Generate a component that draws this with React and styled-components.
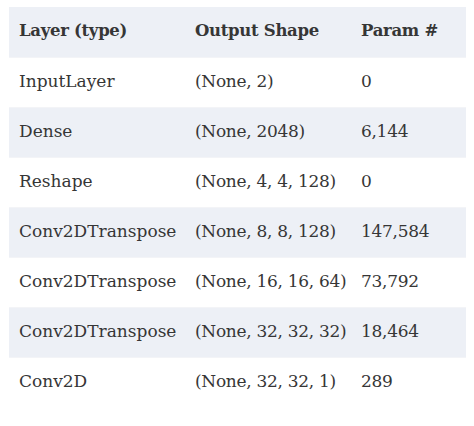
import React from 'react';
import styled, {createGlobalStyle} from 'styled-components';

const Global = createGlobalStyle`
	body {
		margin: 0;
		background: #ffffff;
	}
`;

const Page = styled.div`
	padding: 7px 8px 0 9px;
`;

const Table = styled.table`
	width: 457px;
	table-layout: fixed;
	border-collapse: collapse;
	font-family: 'DejaVu Serif', 'Liberation Serif', serif;
	font-size: 17px;
	color: #363636;
`;

const Row = styled.tr`
	height: 50px;
	background: ${(p) => (p.$shaded ? '#edf0f6' : '#ffffff')};
	border-bottom: 1px solid ${(p) => (p.$last ? '#ffffff' : '#f3f4f7')};
`;

const HeadCell = styled.th`
	box-sizing: border-box;
	text-align: left;
	font-weight: bold;
	font-size: 16.5px;
	letter-spacing: -0.3px;
	padding: 0 0 2px 10px;
	width: ${(p) => p.$width}px;
	white-space: nowrap;
`;

const Cell = styled.td`
	padding: 0 0 2px 10px;
	white-space: nowrap;
	letter-spacing: ${(p) => (p.$tight ? '-0.3px' : '0')};
`;

const rows = [
	['InputLayer', '(None, 2)', '0'],
	['Dense', '(None, 2048)', '6,144'],
	['Reshape', '(None, 4, 4, 128)', '0'],
	['Conv2DTranspose', '(None, 8, 8, 128)', '147,584'],
	['Conv2DTranspose', '(None, 16, 16, 64)', '73,792'],
	['Conv2DTranspose', '(None, 32, 32, 32)', '18,464'],
	['Conv2D', '(None, 32, 32, 1)', '289'],
];

export default () => {
	return (
		<Page>
			<Global />
			<Table>
				<thead>
					<Row $shaded>
						<HeadCell $width={176}>Layer (type)</HeadCell>
						<HeadCell $width={166}>Output Shape</HeadCell>
						<HeadCell $width={115}>Param #</HeadCell>
					</Row>
				</thead>
				<tbody>
					{rows.map((r, i) => (
						<Row key={i} $shaded={i % 2 === 1} $last={i === rows.length - 1}>
							<Cell>{r[0]}</Cell>
							<Cell $tight>{r[1]}</Cell>
							<Cell $tight>{r[2]}</Cell>
						</Row>
					))}
				</tbody>
			</Table>
		</Page>
	);
};
